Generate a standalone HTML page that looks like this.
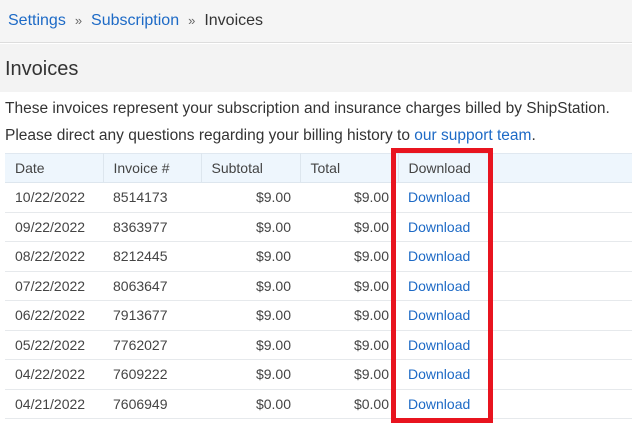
<!DOCTYPE html>
<html><head><meta charset="utf-8"><style>
*{margin:0;padding:0;box-sizing:border-box}
body{width:632px;height:435px;background:#fff;font-family:"Liberation Sans",sans-serif;color:#333;position:relative;overflow:hidden}
.bc{position:absolute;left:0;top:0;width:632px;height:43px;background:#f5f5f5;border-bottom:1px solid #ddd;font-size:16px;line-height:42px;padding-left:8px}
.bc a{color:#1d6ac6;text-decoration:none}
.bc .s{color:#666;font-size:13px;margin:0 9px}
.bc .c{color:#333}
.hd{position:absolute;left:0;top:44px;width:632px;height:48px;background:#f3f3f3;font-size:20px;line-height:50px;padding-left:5px;color:#333}
.p{position:absolute;left:5px;font-size:15.5px;color:#333;white-space:nowrap}
.p a{color:#1d6ac6;text-decoration:none}
table{position:absolute;left:5px;top:153px;border-collapse:collapse;font-size:14px;width:627px}
th{background:#eef6fd;font-weight:normal;text-align:left;height:29px;padding-left:10px;border-right:1px solid #dde6ee;border-top:1px solid #e0e8f0;border-bottom:1px solid #dde6ee;color:#444}
th:nth-child(5),th:last-child{border-right:none}
td{height:29.5px;border-bottom:1px solid #e6e9ec;padding-left:10px;color:#444}
td.r{text-align:right;padding-right:9px;padding-left:0}
td a{color:#1d6ac6;text-decoration:none}
.box{position:absolute;left:391px;top:148px;width:102px;height:275px;border:5px solid #e8141f}
</style></head><body>
<div class="bc"><a>Settings</a><span class="s">»</span><a>Subscription</a><span class="s">»</span><span class="c">Invoices</span></div>
<div class="hd">Invoices</div>
<div class="p" style="top:100px">These invoices represent your subscription and insurance charges billed by ShipStation.</div>
<div class="p" style="top:127px">Please direct any questions regarding your billing history to <a>our support team</a>.</div>
<table>
<tr><th style="width:98px">Date</th><th style="width:98px">Invoice #</th><th style="width:99px">Subtotal</th><th style="width:98px">Total</th><th style="width:98px">Download</th><th></th></tr>
<tr><td>10/22/2022</td><td>8514173</td><td class="r">$9.00</td><td class="r">$9.00</td><td><a>Download</a></td><td></td></tr>
<tr><td>09/22/2022</td><td>8363977</td><td class="r">$9.00</td><td class="r">$9.00</td><td><a>Download</a></td><td></td></tr>
<tr><td>08/22/2022</td><td>8212445</td><td class="r">$9.00</td><td class="r">$9.00</td><td><a>Download</a></td><td></td></tr>
<tr><td>07/22/2022</td><td>8063647</td><td class="r">$9.00</td><td class="r">$9.00</td><td><a>Download</a></td><td></td></tr>
<tr><td>06/22/2022</td><td>7913677</td><td class="r">$9.00</td><td class="r">$9.00</td><td><a>Download</a></td><td></td></tr>
<tr><td>05/22/2022</td><td>7762027</td><td class="r">$9.00</td><td class="r">$9.00</td><td><a>Download</a></td><td></td></tr>
<tr><td>04/22/2022</td><td>7609222</td><td class="r">$9.00</td><td class="r">$9.00</td><td><a>Download</a></td><td></td></tr>
<tr><td>04/21/2022</td><td>7606949</td><td class="r">$0.00</td><td class="r">$0.00</td><td><a>Download</a></td><td></td></tr>
</table>
<div class="box"></div>
</body></html>
